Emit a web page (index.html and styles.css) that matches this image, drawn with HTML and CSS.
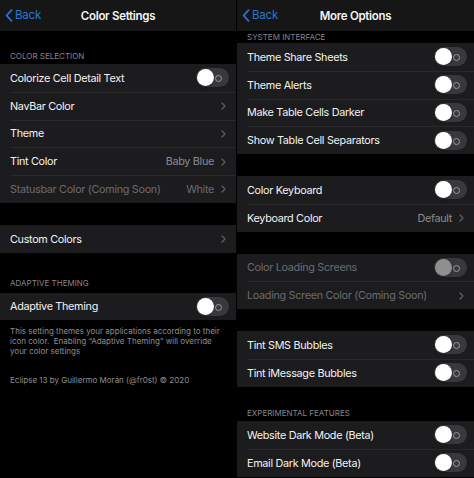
FILE: index.html
```html
<!DOCTYPE html>
<html lang="en">
<head>
	<meta charset="UTF-8">
	<title>Eclipse Settings</title>
	<link rel="stylesheet" href="styles.css">
</head>
<body>
	<div class="screen">
		<!-- 左侧：Color Settings -->
		<div class="panel">
			<div class="navbar">
				<a href="javascript:;" class="back">
					<svg width="8" height="13" viewBox="0 0 8 13"><path d="M6.5 1.2L1.6 6.5l4.9 5.3" fill="none" stroke="#2a74d3" stroke-width="1.8" stroke-linecap="round" stroke-linejoin="round"/></svg>
					Back
				</a>
				<div class="title">Color Settings</div>
			</div>
			<div class="header h-color">COLOR SELECTION</div>
			<ul class="group">
				<li><span class="label">Colorize Cell Detail Text</span><span class="switch"><i></i></span></li>
				<li><span class="label">NavBar Color</span><span class="chev"></span></li>
				<li><span class="label">Theme</span><span class="chev"></span></li>
				<li><span class="label">Tint Color</span><span class="detail">Baby Blue</span><span class="chev"></span></li>
				<li class="off"><span class="label">Statusbar Color (Coming Soon)</span><span class="detail">White</span><span class="chev"></span></li>
			</ul>
			<ul class="group gap">
				<li><span class="label">Custom Colors</span><span class="chev"></span></li>
			</ul>
			<div class="header h-adapt">ADAPTIVE THEMING</div>
			<ul class="group">
				<li><span class="label">Adaptive Theming</span><span class="switch"><i></i></span></li>
			</ul>
			<p class="footer">This setting themes your applications according to their icon color.&nbsp; Enabling “Adaptive Theming” will override your color settings</p>
			<p class="credit">Eclipse 13 by Guillermo Morán (@fr0st) © 2020</p>
		</div>
		<!-- 右侧：More Options -->
		<div class="panel">
			<div class="navbar">
				<a href="javascript:;" class="back">
					<svg width="8" height="13" viewBox="0 0 8 13"><path d="M6.5 1.2L1.6 6.5l4.9 5.3" fill="none" stroke="#2a74d3" stroke-width="1.8" stroke-linecap="round" stroke-linejoin="round"/></svg>
					Back
				</a>
				<div class="title">More Options</div>
			</div>
			<div class="header h-system">SYSTEM INTERFACE</div>
			<ul class="group">
				<li><span class="label">Theme Share Sheets</span><span class="switch"><i></i></span></li>
				<li><span class="label">Theme Alerts</span><span class="switch"><i></i></span></li>
				<li><span class="label">Make Table Cells Darker</span><span class="switch"><i></i></span></li>
				<li><span class="label">Show Table Cell Separators</span><span class="switch"><i></i></span></li>
			</ul>
			<ul class="group gap">
				<li><span class="label">Color Keyboard</span><span class="switch"><i></i></span></li>
				<li><span class="label">Keyboard Color</span><span class="detail">Default</span><span class="chev"></span></li>
			</ul>
			<ul class="group gap">
				<li class="off"><span class="label">Color Loading Screens</span><span class="switch"><i></i></span></li>
				<li class="off"><span class="label">Loading Screen Color (Coming Soon)</span><span class="chev"></span></li>
			</ul>
			<ul class="group gap">
				<li><span class="label">Tint SMS Bubbles</span><span class="switch"><i></i></span></li>
				<li><span class="label">Tint iMessage Bubbles</span><span class="switch"><i></i></span></li>
			</ul>
			<div class="header h-exp">EXPERIMENTAL FEATURES</div>
			<ul class="group">
				<li><span class="label">Website Dark Mode (Beta)</span><span class="switch"><i></i></span></li>
				<li><span class="label">Email Dark Mode (Beta)</span><span class="switch"><i></i></span></li>
			</ul>
		</div>
	</div>
</body>
</html>
```
FILE: styles.css
```css
*{margin:0;padding:0;list-style:none;box-sizing:border-box;}
body{background:#000;font-family:Inter,"Noto Sans",sans-serif;color:#f2f2f2;overflow:hidden;}
a{text-decoration:none;}
.screen{display:flex;gap:1px;width:474px;height:478px;}
.panel{flex:1;display:flex;flex-direction:column;background:#000;overflow:hidden;}
.panel:first-child{flex:0 0 236px;}
.navbar{height:31px;background:#161617;position:relative;display:flex;align-items:center;justify-content:center;}
.title{font-size:11.5px;font-weight:600;color:#f4f4f4;letter-spacing:-0.3px;}
.back{position:absolute;left:5px;top:8px;display:flex;align-items:center;gap:2px;color:#2a74d3;font-size:11.5px;letter-spacing:-0.2px;}
.header{font-size:8px;color:#85858a;padding-left:10px;display:flex;align-items:flex-end;}
.h-color{height:33px;padding-bottom:3.5px;}
.h-adapt{height:40px;padding-bottom:5px;}
.h-system{height:12px;align-items:center;}
.h-exp{height:34.5px;padding-bottom:3.5px;}
.group{background:#1c1c1e;}
.gap{margin-top:22px;}
.group li{height:27.75px;display:flex;align-items:center;padding:1px 7px 0 10px;position:relative;font-size:10.8px;letter-spacing:-0.3px;}
.group li+li:before{content:"";position:absolute;left:10px;right:0;top:0;height:1px;background:#29292b;}
.label{flex:1;white-space:nowrap;}
.detail{color:#8b8b90;margin-right:7px;}
.chev{width:5px;height:8px;margin-right:3px;background:no-repeat center/5px 8px url("data:image/svg+xml,%3Csvg xmlns='http://www.w3.org/2000/svg' viewBox='0 0 5 8'%3E%3Cpath d='M1 1l3 3-3 3' fill='none' stroke='%23606065' stroke-width='1.2' stroke-linecap='round' stroke-linejoin='round'/%3E%3C/svg%3E");}
.off .label,.off .detail{color:#6b6b70;}
.switch{width:33px;height:19px;margin-top:-1px;border-radius:10px;background:#39393d;position:relative;}
.switch:after{content:"";position:absolute;right:7px;top:7px;width:5px;height:5px;border-radius:50%;border:1px solid #9a9a9e;}
.switch i{position:absolute;left:1px;top:1px;width:17px;height:17px;border-radius:50%;background:#fff;box-shadow:0 1px 2px rgba(0,0,0,0.3);}
.off .switch i{background:#8f8f8f;}
.footer{font-size:8px;line-height:10px;color:#8e8e93;padding:6px 8px 0 10px;}
.credit{font-size:8px;color:#8e8e93;padding:19px 10px 0;}
```
